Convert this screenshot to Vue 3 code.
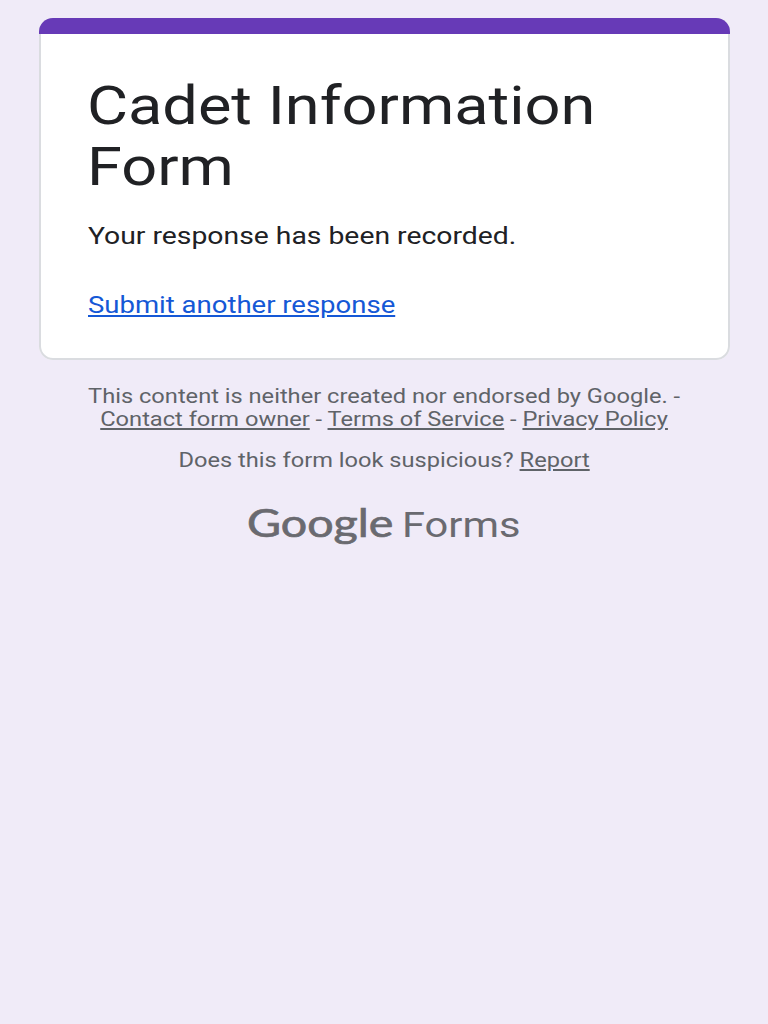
<script setup>
</script>

<template>
  <main class="page">
    <section class="card">
      <div class="band"></div>
      <div class="body">
        <h1 class="title">Cadet Information<br>Form</h1>
        <p class="note">Your response has been recorded.</p>
        <a class="again" href="#">Submit another response</a>
      </div>
    </section>
    <footer class="foot">
      <p class="line">This content is neither created nor endorsed by Google. -<br><a href="#">Contact form owner</a> - <a href="#">Terms of Service</a> - <a href="#">Privacy Policy</a></p>
      <p class="line sus">Does this form look suspicious? <a href="#">Report</a></p>
      <div class="brand"><span class="google">Google</span><span class="forms">Forms</span></div>
    </footer>
  </main>
</template>

<style>
html, body { margin: 0; background: #f0ebf8; }
</style>

<style scoped>
.page {
  min-height: 1024px;
  box-sizing: border-box;
  padding: 18px 38px 0 39px;
  background: #f0ebf8;
  font-family: Roboto, "Liberation Sans", sans-serif;
}
.card {
  background: #fff;
  border-radius: 14px;
  overflow: hidden;
  box-shadow: inset 0 0 0 2px #dadce0;
}
.band { height: 16px; background: #673ab7; }
.body { padding: 42px 50px 39px 49px; }
.title {
  margin: 0 0 0 -1px;
  width: 500px;
  font-size: 53px;
  line-height: 61px;
  font-weight: 400;
  color: #202124;
  transform: scaleX(1.19);
  transform-origin: left center;
}
.note {
  margin: 22px 0 0;
  width: 420px;
  font-size: 24px;
  line-height: 32px;
  color: #202124;
  transform: scaleX(1.18);
  transform-origin: left center;
}
.again {
  display: block;
  width: 300px;
  margin-top: 37px;
  font-size: 24px;
  line-height: 32px;
  color: #1558d6;
  transform: scaleX(1.146);
  transform-origin: left center;
}
.foot { text-align: center; color: #5f6368; }
.line { margin: 25px 0 0; font-size: 21px; line-height: 23px; color: #5f6368; transform: scaleX(1.125); transform-origin: 349px center; }
.line a { color: #5f6368; }
.sus { margin-top: 18px; }
.brand { margin-top: 27px; padding-left: 6px; display: flex; justify-content: center; align-items: baseline; gap: 9px; color: #6a6a70; }
.google { font-size: 38px; font-weight: 400; font-family: Lato, sans-serif; -webkit-text-stroke: 0.7px #6a6a70; transform: scaleX(1.226); transform-origin: right center; }
.forms { font-size: 35px; transform: scaleX(1.19); transform-origin: left center; }
</style>
